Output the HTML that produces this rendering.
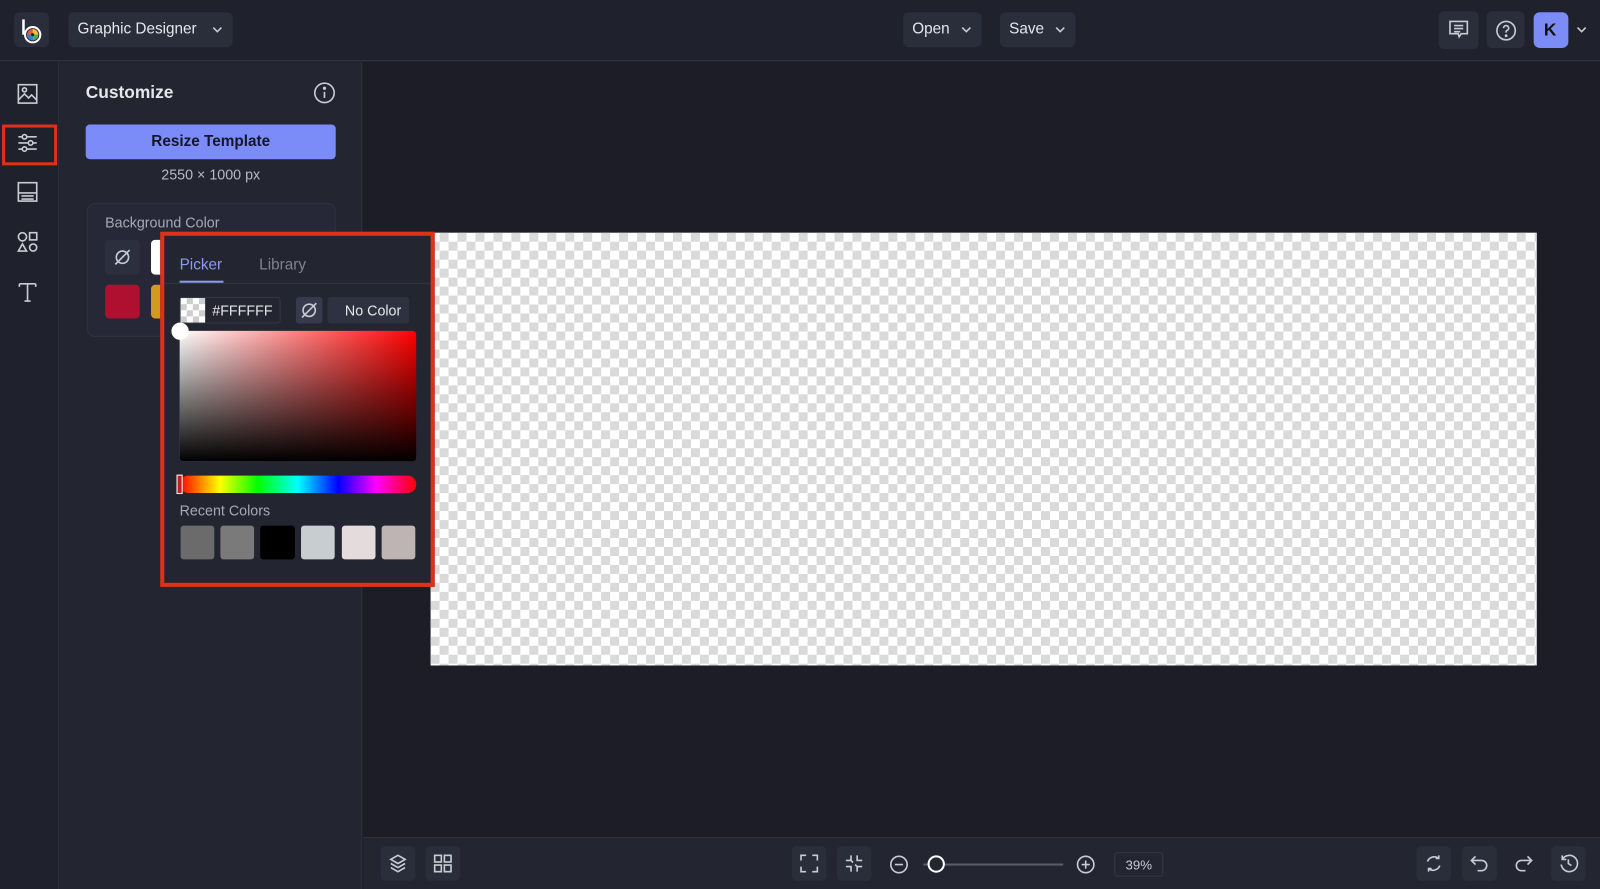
<!DOCTYPE html>
<html><head><meta charset="utf-8"><style>
*{box-sizing:border-box;margin:0;padding:0}
body{width:1600px;height:889px;overflow:hidden;background:#1c1d26;font-family:"Liberation Sans",sans-serif}
#s{position:absolute;left:0;top:0;width:1568px;height:871px;transform:scale(1.0204,1.0207);transform-origin:0 0;background:#1c1d26}
.a{position:absolute}
.btn{position:absolute;background:#2a2d3a;border-radius:5px}
.ic{position:absolute;stroke:#c9cbd3;fill:none;stroke-width:1.6}
.t{position:absolute;color:#e6e7ec;white-space:nowrap}
</style></head><body><div id="s">
<!-- top bar -->
<div class="a" style="left:0;top:0;width:1568px;height:60px;background:#1f212c;border-bottom:1px solid #363847"></div>
<div class="btn" style="left:14px;top:12px;width:34px;height:34px"></div>
<svg class="a" style="left:14px;top:12px" width="34" height="34"><line x1="9" y1="7" x2="9" y2="22" stroke="#fff" stroke-width="2.5"/><circle cx="18" cy="22" r="7.5" fill="none" stroke="#fff" stroke-width="2"/><circle cx="18" cy="22" r="5.5" fill="#e05d3a"/><path d="M18 22 L18 16.5 A5.5 5.5 0 0 1 23.5 22Z" fill="#f2c033"/><path d="M18 22 L23.5 22 A5.5 5.5 0 0 1 18 27.5Z" fill="#3ab26a"/><path d="M18 22 L18 27.5 A5.5 5.5 0 0 1 12.5 22Z" fill="#3a7fd6"/><circle cx="18" cy="22" r="1.5" fill="#222"/></svg>
<div class="btn" style="left:67px;top:12px;width:161px;height:34px"></div>
<div class="t" style="left:76px;top:20px;font-size:15px">Graphic Designer</div>
<svg class="ic" style="left:207px;top:25px" width="12" height="8"><path d="M2 2l4 4 4-4"/></svg>
<div class="btn" style="left:885px;top:12px;width:77px;height:34px"></div>
<div class="t" style="left:894px;top:20px;font-size:15px">Open</div>
<svg class="ic" style="left:941px;top:25px" width="12" height="8"><path d="M2 2l4 4 4-4"/></svg>
<div class="btn" style="left:980px;top:12px;width:74px;height:34px"></div>
<div class="t" style="left:989px;top:20px;font-size:15px">Save</div>
<svg class="ic" style="left:1033px;top:25px" width="12" height="8"><path d="M2 2l4 4 4-4"/></svg>
<div class="btn" style="left:1410px;top:11px;width:39px;height:37px"></div>
<svg class="ic" style="left:1418px;top:18px" width="24" height="24" stroke="#fff"><path d="M3 3h17v12h-6l-2 3-1-3H3z"/><path d="M7 7h9M7 10h9M7 13h6"/></svg>
<div class="btn" style="left:1457px;top:11px;width:37px;height:36px"></div>
<svg class="ic" style="left:1464px;top:18px" width="24" height="24" stroke="#fff"><circle cx="12" cy="12" r="9"/><path d="M9.5 9.5a2.5 2.5 0 1 1 3.5 2.3c-.7.3-1 .9-1 1.7v.5"/><circle cx="12" cy="17" r=".6" fill="#fff"/></svg>
<div class="a" style="left:1503px;top:12px;width:34px;height:35px;background:#7b8cf7;border-radius:6px"></div>
<div class="t" style="left:1513px;top:20px;font-size:17px;font-weight:bold;color:#111">K</div>
<svg class="ic" style="left:1544px;top:25px" width="12" height="8"><path d="M2 2l4 4 4-4"/></svg>
<!-- left rail -->
<div class="a" style="left:0;top:61px;width:58px;height:810px;background:#1f212c;border-right:1px solid #30323f"></div>
<svg class="ic" style="left:16px;top:81px" width="22" height="22" stroke="#8a8d99"><rect x="2" y="2" width="18" height="18"/><circle cx="8" cy="7" r="2"/><path d="M2 17l6-6 4 4 3-3 5 5"/></svg>
<div class="a" style="left:2px;top:122px;width:54px;height:40px;border:3px solid #e0301a"></div>
<svg class="ic" style="left:16px;top:129px" width="22" height="22" stroke="#fff"><path d="M2 5h18M2 11h18M2 17h18"/><circle cx="8" cy="5" r="2.2" fill="#1f212c"/><circle cx="14" cy="11" r="2.2" fill="#1f212c"/><circle cx="8" cy="17" r="2.2" fill="#1f212c"/></svg>
<svg class="ic" style="left:16px;top:177px" width="22" height="22" stroke="#8a8d99"><rect x="2" y="2" width="18" height="18"/><path d="M2 12h18M5 15h12M5 18h12"/></svg>
<svg class="ic" style="left:16px;top:226px" width="22" height="22" stroke="#8a8d99"><circle cx="6" cy="6" r="4"/><rect x="13" y="2" width="7" height="7"/><path d="M6 13l4 7H2z"/><circle cx="16.5" cy="16.5" r="3.5"/></svg>
<svg class="ic" style="left:16px;top:275px" width="22" height="22" stroke="#8a8d99"><path d="M3 3h16M11 3v17M8 20h6M3 3v3M19 3v3"/></svg>
<!-- panel -->
<div class="a" style="left:58px;top:61px;width:297px;height:810px;background:#232531;border-right:1px solid #30323f"></div>
<div class="t" style="left:84px;top:81px;font-size:17px;font-weight:bold">Customize</div>
<svg class="ic" style="left:307px;top:80px" width="22" height="22" stroke="#fff"><circle cx="11" cy="11" r="9.5"/><path d="M11 10v6"/><circle cx="11" cy="6.5" r=".8" fill="#fff"/></svg>
<div class="a" style="left:84px;top:122px;width:245px;height:34px;background:#7b8cf8;border-radius:4px"></div>
<div class="t" style="left:84px;top:130px;width:245px;text-align:center;font-size:15px;font-weight:bold;color:#14162a">Resize Template</div>
<div class="t" style="left:84px;top:163px;width:245px;text-align:center;font-size:14px;color:#b6b8c2">2550 × 1000 px</div>
<div class="a" style="left:85px;top:199px;width:244px;height:131px;background:#262837;border:1px solid #30323f;border-radius:8px"></div>
<div class="t" style="left:103px;top:210px;font-size:14px;color:#a6a8b3">Background Color</div>
<div class="a" style="left:103px;top:235px;width:34px;height:34px;background:#2c2f3d;border-radius:4px"></div>
<svg class="ic" style="left:110px;top:242px" width="20" height="20" stroke="#fff"><circle cx="10" cy="10" r="6"/><path d="M3 17L17 3"/></svg>
<div class="a" style="left:148px;top:235px;width:30px;height:34px;background:#fff;border-radius:4px"></div>
<div class="a" style="left:103px;top:279px;width:34px;height:33px;background:#b01030;border-radius:4px"></div>
<div class="a" style="left:148px;top:279px;width:30px;height:33px;background:#d49a20;border-radius:4px"></div>
<!-- canvas -->
<div class="a" style="left:422px;top:228px;width:1084px;height:424px;background-color:#fff;background-image:linear-gradient(45deg,#d9d9d9 25%,transparent 25%,transparent 75%,#d9d9d9 75%),linear-gradient(45deg,#d9d9d9 25%,transparent 25%,transparent 75%,#d9d9d9 75%);background-size:17.6px 17.6px;background-position:0 0,8.8px 8.8px"></div>
<!-- popup -->
<div class="a" style="left:157px;top:227px;width:269px;height:348px;background:#232531;border:4px solid #e0301a"></div>
<div class="t" style="left:176px;top:251px;font-size:15px;color:#8d9af0">Picker</div>
<div class="t" style="left:254px;top:251px;font-size:15px;color:#7f828f">Library</div>
<div class="a" style="left:161px;top:277px;width:261px;height:1px;background:#343746"></div>
<div class="a" style="left:176px;top:275px;width:43px;height:2px;background:#8d9af0"></div>
<div class="a" style="left:176px;top:291px;width:99px;height:26px;border:1px solid #343746;border-radius:3px"></div>
<div class="a" style="left:177px;top:292px;width:24px;height:24px;background-color:#fff;background-image:linear-gradient(45deg,#ccc 25%,transparent 25%,transparent 75%,#ccc 75%),linear-gradient(45deg,#ccc 25%,transparent 25%,transparent 75%,#ccc 75%);background-size:12px 12px;background-position:0 0,6px 6px"></div>
<div class="t" style="left:208px;top:296px;font-size:14px">#FFFFFF</div>
<div class="a" style="left:290px;top:291px;width:26px;height:26px;background:#363a4c;border-radius:3px"></div>
<svg class="ic" style="left:293px;top:294px" width="20" height="20" stroke="#fff"><circle cx="10" cy="10" r="6"/><path d="M3 17L17 3"/></svg>
<div class="a" style="left:321px;top:291px;width:80px;height:26px;background:#2e3140;border-radius:3px"></div>
<div class="t" style="left:338px;top:296px;font-size:14px">No Color</div>
<div class="a" style="left:176px;top:324px;width:232px;height:128px;border-radius:4px;background:linear-gradient(to top,#000,transparent),linear-gradient(to right,#fff,#f00)"></div>
<div class="a" style="left:168px;top:316px;width:17px;height:17px;border-radius:50%;background:#fff"></div>
<div class="a" style="left:176px;top:466px;width:232px;height:17px;border-radius:9px;background:linear-gradient(to right,#f00,#ff0 17%,#0f0 33%,#0ff 50%,#00f 67%,#f0f 83%,#f00)"></div>
<div class="a" style="left:173px;top:465px;width:6px;height:19px;background:#c02020;border:1.5px solid #fff"></div>
<div class="t" style="left:176px;top:492px;font-size:14px;color:#a6a8b3">Recent Colors</div>
<div class="a" style="left:177px;top:515px;width:33px;height:33px;background:#6b6b6b;border-radius:3px"></div>
<div class="a" style="left:216px;top:515px;width:33px;height:33px;background:#7a7a7a;border-radius:3px"></div>
<div class="a" style="left:255px;top:515px;width:34px;height:33px;background:#000;border-radius:3px"></div>
<div class="a" style="left:295px;top:515px;width:33px;height:33px;background:#c8cdd0;border-radius:3px"></div>
<div class="a" style="left:335px;top:515px;width:33px;height:33px;background:#e4dcdc;border-radius:3px"></div>
<div class="a" style="left:374px;top:515px;width:33px;height:33px;background:#beb4b4;border-radius:3px"></div>
<!-- bottom bar -->
<div class="a" style="left:356px;top:820px;width:1212px;height:51px;background:#232531;border-top:1px solid #30323f"></div>
<div class="btn" style="left:373px;top:829px;width:34px;height:34px;background:#2a2d3a"></div>
<svg class="ic" style="left:380px;top:836px" width="20" height="20" stroke="#8a8d99"><path d="M10 2l7 4-7 4-7-4z"/><path d="M3 10l7 4 7-4M3 14l7 4 7-4"/></svg>
<div class="btn" style="left:417px;top:829px;width:34px;height:34px"></div>
<svg class="ic" style="left:424px;top:836px" width="20" height="20" stroke="#fff"><rect x="2" y="2" width="6.5" height="6.5"/><rect x="11.5" y="2" width="6.5" height="6.5"/><rect x="2" y="11.5" width="6.5" height="6.5"/><rect x="11.5" y="11.5" width="6.5" height="6.5"/></svg>
<div class="btn" style="left:776px;top:829px;width:34px;height:34px"></div>
<svg class="ic" style="left:783px;top:836px" width="20" height="20" stroke="#fff"><path d="M2 7V2h5M13 2h5v5M18 13v5h-5M7 18H2v-5"/></svg>
<div class="btn" style="left:820px;top:829px;width:34px;height:34px"></div>
<svg class="ic" style="left:827px;top:836px" width="20" height="20" stroke="#fff"><path d="M2 7h5V2M13 2v5h5M18 13h-5v5M7 18v-5H2M9 9l-3-3M11 11l3 3"/></svg>
<svg class="ic" style="left:871px;top:837px" width="20" height="20" stroke="#fff"><circle cx="10" cy="10" r="8"/><path d="M6 10h8"/></svg>
<div class="a" style="left:905px;top:846px;width:137px;height:2px;background:#5a5d6a"></div>
<div class="a" style="left:909px;top:838px;width:17px;height:17px;border-radius:50%;border:2px solid #fff;background:#232531"></div>
<svg class="ic" style="left:1054px;top:837px" width="20" height="20" stroke="#fff"><circle cx="10" cy="10" r="8"/><path d="M6 10h8M10 6v8"/></svg>
<div class="a" style="left:1092px;top:835px;width:48px;height:24px;border:1px solid #343746;border-radius:3px"></div>
<div class="t" style="left:1092px;top:840px;width:48px;text-align:center;font-size:13px;color:#c9cbd3">39%</div>
<div class="btn" style="left:1388px;top:829px;width:34px;height:34px"></div>
<svg class="ic" style="left:1395px;top:836px" width="20" height="20" stroke="#fff"><path d="M15 5a7 7 0 0 0-11 3M5 15a7 7 0 0 0 11-3M15 2v3h-3M5 18v-3h3"/></svg>
<div class="btn" style="left:1433px;top:829px;width:34px;height:34px"></div>
<svg class="ic" style="left:1440px;top:836px" width="20" height="20" stroke="#fff"><path d="M6 3L2 7l4 4M2 7h10a5 5 0 0 1 0 10H8"/></svg>
<svg class="ic" style="left:1483px;top:836px" width="20" height="20" stroke="#5a5d6a"><path d="M14 3l4 4-4 4M18 7H8a5 5 0 0 0 0 10h4"/></svg>
<div class="btn" style="left:1520px;top:829px;width:34px;height:34px"></div>
<svg class="ic" style="left:1527px;top:836px" width="20" height="20" stroke="#fff"><path d="M4 6a8 8 0 1 1-1 5M4 2v4h4M10 6v4l3 2"/></svg>
</div></body></html>
